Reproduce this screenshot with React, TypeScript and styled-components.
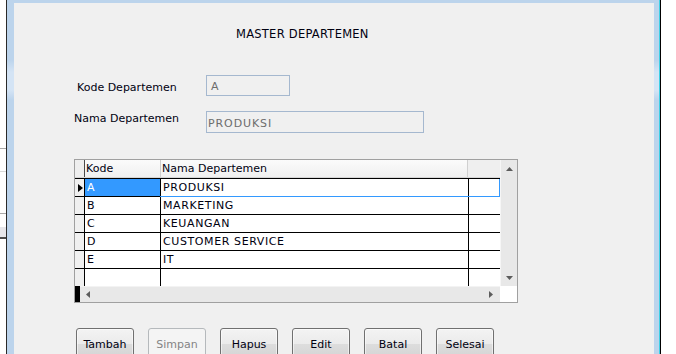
import React from 'react';
import styled, { createGlobalStyle } from 'styled-components';

const GlobalStyle = createGlobalStyle`
  html, body { margin: 0; padding: 0; background: #ffffff; }
  body {
    font-family: "DejaVu Sans", "Liberation Sans", sans-serif;
    font-size: 11px;
    color: #000000;
  }
  #root { width: 676px; height: 354px; overflow: hidden; }
  * { box-sizing: border-box; }
`;

const Page = styled.div`
  display: flex;
  width: 676px;
  height: 354px;
  background: #ffffff;
  overflow: hidden;
`;

const BackdropStrip = styled.div`
  flex: none;
  width: 6px;
  background: linear-gradient(
    to bottom,
    #ffffff 0 148px,
    #a9a9a9 148px 149px,
    #ffffff 149px 171px,
    #d9d9d9 171px 172px,
    #ffffff 172px 213px,
    #a9a9a9 213px 214px,
    #ffffff 214px 227px,
    #e6e6ea 227px 237px,
    #4c4c4c 237px 239px,
    #ffffff 239px
  );
`;

const Window = styled.div`
  flex: none;
  display: flex;
  box-sizing: content-box;
  width: 640px;
  height: 351px;
  padding: 3px 6px 0 7px;
  border-left: 1px solid #2a2a2a;
  border-right: 1px solid #000000;
  background: linear-gradient(
    to bottom,
    #bcd4ec 0 60px,
    #d4e4f5 72px 90px,
    #bcd4ec 100px
  );
  box-shadow: inset -1px 0 0 #3fd0e6;
`;

const Panel = styled.div`
  display: flex;
  flex-direction: column;
  width: 640px;
  height: 351px;
  padding-top: 25px;
  background: #f0f0f0;
`;

const Title = styled.div`
  padding-left: 222px;
  font-size: 11.5px;
  line-height: 13px;
  letter-spacing: 0.25px;
  color: #000010;
`;

const FormRow = styled.div<{ $top: number; $indent: number }>`
  display: flex;
  align-items: flex-start;
  margin-top: ${(p) => p.$top}px;
  padding-left: ${(p) => p.$indent}px;
`;

const Label = styled.div<{ $width: number; $pt: number }>`
  flex: none;
  width: ${(p) => p.$width}px;
  padding-top: ${(p) => p.$pt}px;
  line-height: 13px;
  color: #000010;
`;

const Field = styled.div<{ $width: number; $height: number; $pt: number; $pl: number }>`
  flex: none;
  width: ${(p) => p.$width}px;
  height: ${(p) => p.$height}px;
  padding: ${(p) => p.$pt}px 0 0 ${(p) => p.$pl}px;
  border: 1px solid #a5b8cf;
  background: #f0f0f0;
  color: #6d6d6d;
  line-height: 13px;
  letter-spacing: 0.9px;
`;

/* ---------- Table ---------- */

const TableFrame = styled.div`
  margin-top: 26px;
  margin-left: 60px;
  width: 444px;
  height: 144px;
  border: 1px solid #a0a0a0;
  display: grid;
  grid-template-columns: 425px 17px;
  grid-template-rows: 126px 16px;
  background: #ffffff;
`;

const Viewport = styled.div`
  display: flex;
  flex-direction: column;
  background: #ffffff;
`;

const HeaderRow = styled.div`
  display: grid;
  grid-template-columns: 9px 76px 308px 32px;
  height: 18px;
  border-bottom: 1px solid #d6d6d6;
  background: #efefef;
`;

const HeaderCorner = styled.div`
  background: #eeeeee;
`;

const HeaderCell = styled.div<{ $edge: string; $right?: boolean }>`
  padding: 2px 0 0 1px;
  line-height: 13px;
  border-left: 1px solid ${(p) => p.$edge};
  border-right: ${(p) => (p.$right ? '1px solid #d0d0d0' : 'none')};
  background: linear-gradient(to bottom, #fbfbfb, #f0f0f0);
  color: #000010;
  white-space: nowrap;
`;

const HeaderBlank = styled.div`
  background: #efefef;
`;

const DataRow = styled.div`
  display: grid;
  grid-template-columns: 9px 76px 308px 32px;
  height: 18px;
  border-top: 1px solid #000000;
`;

const RowHead = styled.div`
  display: flex;
  align-items: center;
  padding-left: 3px;
  background: #f0f0f0;
`;

const DataCell = styled.div<{ $selected?: boolean; $focus?: boolean; $focusEnd?: boolean }>`
  position: relative;
  z-index: ${(p) => (p.$focus ? 1 : 0)};
  padding: 2px 0 0 2px;
  line-height: 13px;
  letter-spacing: 0.6px;
  border-left: 1px solid #000000;
  white-space: nowrap;
  overflow: hidden;
  background: ${(p) => (p.$selected ? '#3399ff' : '#ffffff')};
  color: ${(p) => (p.$selected ? '#ffffff' : '#000010')};
  box-shadow: ${(p) =>
    p.$focus
      ? p.$focusEnd
        ? '0 1px 0 #3399ff, inset -1px 0 0 #3399ff'
        : '0 1px 0 #3399ff'
      : 'none'};
`;

const VScroll = styled.div`
  display: flex;
  flex-direction: column;
  align-items: center;
  justify-content: space-between;
  padding: 7px 0 6px;
  background: #e8e8e8;
  border-left: 1px solid #f6f6f6;
`;

const HScrollArea = styled.div`
  display: flex;
`;

const RowMarkerBar = styled.div`
  flex: none;
  width: 5px;
  background: #000000;
`;

const HScroll = styled.div`
  flex: 1;
  display: flex;
  align-items: center;
  justify-content: space-between;
  padding: 0 7px 0 6px;
  background: #e8e8e8;
  border-top: 1px solid #f3f3f3;
`;

const Corner = styled.div`
  background: #ffffff;
`;

/* ---------- Buttons ---------- */

const ButtonRow = styled.div`
  display: flex;
  gap: 14px;
  margin-top: 25px;
  margin-left: 62px;
`;

const Button = styled.button<{ $disabled?: boolean }>`
  flex: none;
  width: 58px;
  height: 34px;
  margin: 0;
  padding: 9px 0 0;
  display: flex;
  justify-content: center;
  align-items: flex-start;
  font-family: "DejaVu Sans", "Liberation Sans", sans-serif;
  font-size: 11px;
  line-height: 13px;
  border-radius: 3px;
  border: 1px solid ${(p) => (p.$disabled ? '#b5b9bc' : '#707070')};
  color: ${(p) => (p.$disabled ? '#848484' : '#000010')};
  background: ${(p) =>
    p.$disabled
      ? '#f4f4f4'
      : 'linear-gradient(to bottom, #f3f3f3 0%, #ebebeb 46%, #dddddd 47%, #d2d2d2 100%)'};
  box-shadow: ${(p) => (p.$disabled ? 'none' : 'inset 0 0 0 1px rgba(255,255,255,0.55)')};
`;

const Arrow = ({ dir }: { dir: 'up' | 'down' | 'left' | 'right' }) => {
  const vertical = dir === 'up' || dir === 'down';
  const w = vertical ? 7 : 4;
  const h = vertical ? 4 : 7;
  const d =
    dir === 'up'
      ? 'M0 4 L3.5 0 L7 4 Z'
      : dir === 'down'
      ? 'M0 0 L7 0 L3.5 4 Z'
      : dir === 'left'
      ? 'M4 0 L4 7 L0 3.5 Z'
      : 'M0 0 L4 3.5 L0 7 Z';
  return (
    <svg width={w} height={h} viewBox={`0 0 ${w} ${h}`}>
      <path d={d} fill="#5c5c5c" />
    </svg>
  );
};

const RowPointer = () => (
  <svg width="5" height="8" viewBox="0 0 5 8">
    <path d="M0 0 L5 4 L0 8 Z" fill="#000000" />
  </svg>
);

const rows = [
  { kode: 'A', nama: 'PRODUKSI' },
  { kode: 'B', nama: 'MARKETING' },
  { kode: 'C', nama: 'KEUANGAN' },
  { kode: 'D', nama: 'CUSTOMER SERVICE' },
  { kode: 'E', nama: 'IT' },
  { kode: '', nama: '' },
];

const buttons = [
  { label: 'Tambah' },
  { label: 'Simpan', disabled: true },
  { label: 'Hapus' },
  { label: 'Edit' },
  { label: 'Batal' },
  { label: 'Selesai' },
];

export default function App() {
  return (
    <>
      <GlobalStyle />
      <Page>
        <BackdropStrip />
        <Window>
          <Panel>
            <Title>MASTER DEPARTEMEN</Title>

            <FormRow $top={34} $indent={63}>
              <Label $width={129} $pt={6}>Kode Departemen</Label>
              <Field $width={84} $height={21} $pt={4} $pl={4}>A</Field>
            </FormRow>

            <FormRow $top={15} $indent={60}>
              <Label $width={132} $pt={1}>Nama Departemen</Label>
              <Field $width={218} $height={22} $pt={5} $pl={1}>PRODUKSI</Field>
            </FormRow>

            <TableFrame>
              <Viewport>
                <HeaderRow>
                  <HeaderCorner />
                  <HeaderCell $edge="#4a4a4a">Kode</HeaderCell>
                  <HeaderCell $edge="#cfcfcf" $right>
                    Nama Departemen
                  </HeaderCell>
                  <HeaderBlank />
                </HeaderRow>
                {rows.map((r, i) => (
                  <DataRow key={i}>
                    <RowHead>{i === 0 ? <RowPointer /> : null}</RowHead>
                    <DataCell $selected={i === 0}>{r.kode}</DataCell>
                    <DataCell $focus={i === 0}>{r.nama}</DataCell>
                    <DataCell $focus={i === 0} $focusEnd={i === 0} />
                  </DataRow>
                ))}
              </Viewport>
              <VScroll>
                <Arrow dir="up" />
                <Arrow dir="down" />
              </VScroll>
              <HScrollArea>
                <RowMarkerBar />
                <HScroll>
                  <Arrow dir="left" />
                  <Arrow dir="right" />
                </HScroll>
              </HScrollArea>
              <Corner />
            </TableFrame>

            <ButtonRow>
              {buttons.map((b) => (
                <Button key={b.label} $disabled={b.disabled}>
                  {b.label}
                </Button>
              ))}
            </ButtonRow>
          </Panel>
        </Window>
      </Page>
    </>
  );
}
